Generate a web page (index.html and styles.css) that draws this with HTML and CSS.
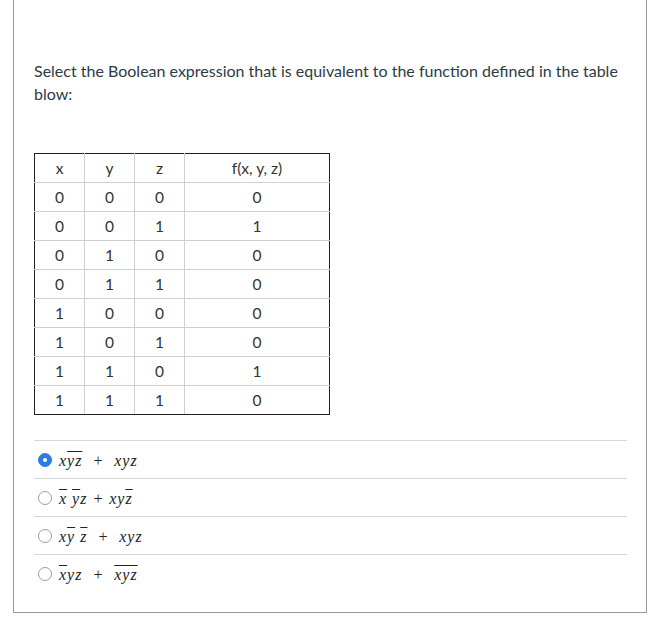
FILE: index.html
```html
<!DOCTYPE html>
<html>
<head>
<meta charset="utf-8">
<link rel="stylesheet" href="styles.css">
</head>
<body>
<div class="card">
  <p class="question">Select the Boolean expression that is equivalent to the function defined in the table blow:</p>
  <table class="truth">
    <tr><td class="c">x</td><td class="c">y</td><td class="c">z</td><td class="f">f(x, y, z)</td></tr>
    <tr><td>0</td><td>0</td><td>0</td><td>0</td></tr>
    <tr><td>0</td><td>0</td><td>1</td><td>1</td></tr>
    <tr><td>0</td><td>1</td><td>0</td><td>0</td></tr>
    <tr><td>0</td><td>1</td><td>1</td><td>0</td></tr>
    <tr><td>1</td><td>0</td><td>0</td><td>0</td></tr>
    <tr><td>1</td><td>0</td><td>1</td><td>0</td></tr>
    <tr><td>1</td><td>1</td><td>0</td><td>1</td></tr>
    <tr><td>1</td><td>1</td><td>1</td><td>0</td></tr>
  </table>
  <ul class="options">
    <li class="option"><span class="radio checked"></span><i class="math">x<span class="bar">yz</span>&nbsp; + &nbsp;xyz</i></li>
    <li class="option"><span class="radio"></span><i class="math"><span class="bar">x</span> <span class="bar">y</span>z + xy<span class="bar">z</span></i></li>
    <li class="option"><span class="radio"></span><i class="math">x<span class="bar">y</span> <span class="bar">z</span>&nbsp; + &nbsp;xyz</i></li>
    <li class="option"><span class="radio"></span><i class="math"><span class="bar">x</span>yz&nbsp; + &nbsp;<span class="bar">xyz</span></i></li>
  </ul>
</div>
</body>
</html>
```
FILE: styles.css
```css
html, body {
  margin: 0;
  padding: 0;
  background: #fff;
}
body {
  font-family: Lato, "Liberation Sans", sans-serif;
  color: #2d3b45;
}
.card {
  margin-left: 13px;
  width: 634px;
  height: 613px;
  box-sizing: border-box;
  border: 1px solid #9a9a9a;
  border-top: none;
  padding: 59px 19px 0 20px;
}
.question {
  margin: 0;
  font-size: 16px;
  line-height: 23px;
  width: 592px;
}
.truth {
  margin-top: 48px;
  border-collapse: collapse;
  border: 1px solid #222;
  font-size: 15.5px;
  color: #333;
}
.truth td {
  border: 1px solid #cfcfcf;
  height: 28px;
  padding: 0;
  text-align: center;
  width: 49px;
  line-height: 16px;
}
.truth td:last-child {
  width: 144px;
}
.truth tr:first-child td {
  border-top: 1px solid #222;
}
.truth td:first-child {
  border-left: 1px solid #222;
}
.truth td:last-child {
  border-right: 1px solid #222;
}
.truth tr:last-child td {
  border-bottom: 1px solid #222;
}
.options {
  list-style: none;
  margin: 25px 0 0 0;
  padding: 0;
  width: 593px;
}
.option {
  border-top: 1px solid #d7d7d7;
  height: 37px;
  display: flex;
  align-items: center;
  padding-left: 4px;
}
.radio {
  width: 12px;
  height: 12px;
  border-radius: 50%;
  border: 1px solid #9d9d9d;
  box-sizing: content-box;
  margin-right: 7px;
  flex: none;
  position: relative;
}
.radio.checked {
  background: #2d7be5;
  border-color: #2d7be5;
}
.radio.checked::after {
  content: "";
  position: absolute;
  left: 4px;
  top: 4px;
  width: 4px;
  height: 4px;
  border-radius: 50%;
  background: #fff;
}
i.math {
  font-family: "Liberation Serif", "Times New Roman", serif;
  font-style: italic;
  font-size: 16px;
  letter-spacing: 1px;
  color: #222;
  white-space: pre;
  padding-top: 2px;
}
.bar {
  text-decoration-line: overline;
  text-decoration-thickness: 1px;
}
```
